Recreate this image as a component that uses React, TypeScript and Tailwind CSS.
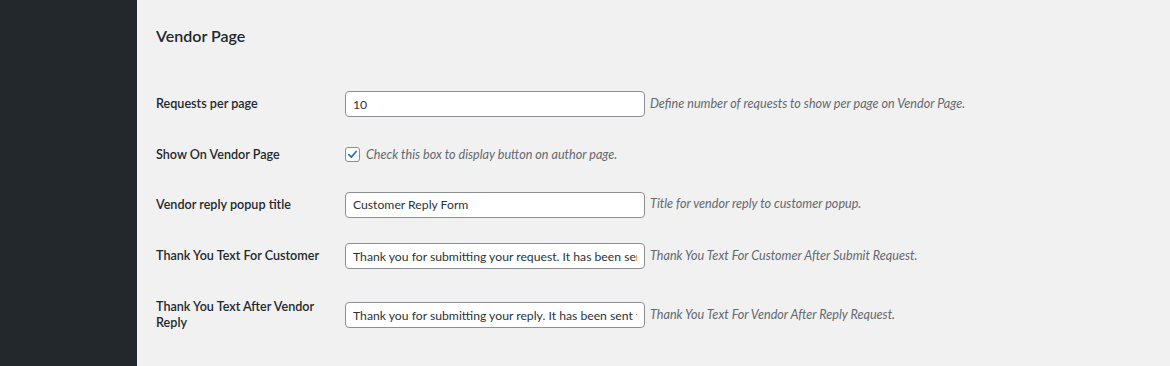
import React from "react";

const font = { fontFamily: "Lato, 'Noto Sans', sans-serif" };

function Row({
  h,
  label,
  children,
}: {
  h: string;
  label: React.ReactNode;
  children: React.ReactNode;
}) {
  return (
    <div className={`flex items-center ${h}`}>
      <div className="w-[189px] shrink-0 pr-[20px] text-[12.6px] leading-[16px] font-semibold text-[#23282d]">
        {label}
      </div>
      <div className="flex items-center">{children}</div>
    </div>
  );
}

function TextInput({ value }: { value: string }) {
  return (
    <input
      type="text"
      readOnly
      value={value}
      className="w-[300px] h-[26px] rounded-[4px] border border-[#8c8f94] bg-white px-[7px] text-[12.2px] text-[#2c3338] outline-none"
      style={font}
    />
  );
}

function Desc({ children }: { children: React.ReactNode }) {
  return <span className="ml-[5px] text-[12.6px] italic text-[#646970]">{children}</span>;
}

export default function App() {
  return (
    <div className="flex w-[1170px] h-[366px] bg-[#f1f1f1] overflow-hidden" style={font}>
      <div className="w-[137px] shrink-0 bg-[#23282d]" />
      <div className="flex-1 pl-[19px]">
        <h2 className="pt-[26px] h-[78px] text-[16px] leading-[20px] font-semibold text-[#23282d]">
          Vendor Page
        </h2>
        <Row h="h-[52px]" label="Requests per page">
          <TextInput value="10" />
          <Desc>Define number of requests to show per page on Vendor Page.</Desc>
        </Row>
        <Row h="h-[50px]" label="Show On Vendor Page">
          <span className="flex h-[15px] w-[15px] items-center justify-center rounded-[3px] border border-[#8c8f94] bg-white">
            <svg viewBox="0 0 16 16" className="h-[13px] w-[13px]">
              <path d="M3.5 8.2 L6.6 11.2 L12.6 4.2" fill="none" stroke="#2271b1" strokeWidth="2" strokeLinecap="round" strokeLinejoin="round" />
            </svg>
          </span>
          <span className="ml-[6px] text-[12.6px] italic text-[#646970]">
            Check this box to display button on author page.
          </span>
        </Row>
        <Row h="h-[49px]" label="Vendor reply popup title">
          <TextInput value="Customer Reply Form" />
          <Desc>Title for vendor reply to customer popup.</Desc>
        </Row>
        <Row h="h-[54px]" label="Thank You Text For Customer">
          <TextInput value="Thank you for submitting your request. It has been sent to the vendor." />
          <Desc>Thank You Text For Customer After Submit Request.</Desc>
        </Row>
        <Row h="h-[64px]" label={<>Thank You Text After Vendor<br />Reply</>}>
          <TextInput value="Thank you for submitting your reply. It has been sent to the customer." />
          <Desc>Thank You Text For Vendor After Reply Request.</Desc>
        </Row>
      </div>
    </div>
  );
}
